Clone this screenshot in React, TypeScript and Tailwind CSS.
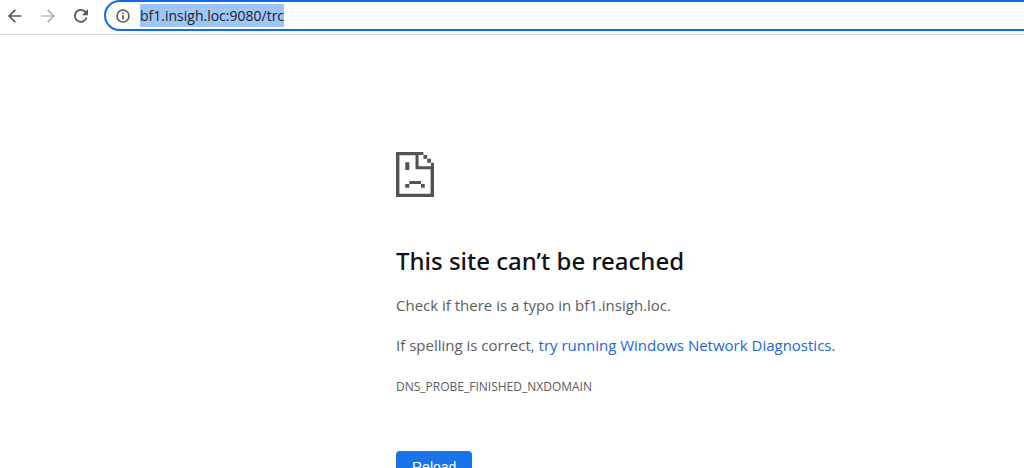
import React from 'react';

const HOST = 'bf1.insigh.loc';

const IconButton: React.FC<{ label: string; disabled?: boolean; children: React.ReactNode }> = ({
  label,
  disabled = false,
  children,
}) => (
  <button
    type="button"
    aria-label={label}
    disabled={disabled}
    className={`flex h-7 w-7 items-center justify-center rounded-full ${
      disabled ? 'text-[#b4b6b9]' : 'text-[#54575b]'
    }`}
  >
    {children}
  </button>
);

const Toolbar: React.FC = () => (
  <header className="flex h-[35px] items-start overflow-hidden border-b border-[#d9dadc]">
    <div className="flex h-[31px] shrink-0 items-center gap-[5px] pr-2 pl-px">
      <IconButton label="Back">
        <svg className="h-4 w-4" viewBox="0 0 16 16" fill="none" stroke="currentColor" strokeWidth="1.7">
          <path d="M14.5 8H2.5M8.3 1.8L2.1 8l6.2 6.2" />
        </svg>
      </IconButton>
      <IconButton label="Forward" disabled>
        <svg className="h-4 w-4" viewBox="0 0 16 16" fill="none" stroke="currentColor" strokeWidth="1.7">
          <path d="M1.5 8h12M7.7 1.8L13.9 8l-6.2 6.2" />
        </svg>
      </IconButton>
      <IconButton label="Reload this page">
        <svg className="h-4 w-4" viewBox="0 0 16 16" fill="none" stroke="currentColor" strokeWidth="1.8">
          <path d="M13.6 9.6A6 6 0 1 1 12.6 4.1" />
          <path d="M15 1.2v6H9l2.4-2.4z" fill="currentColor" stroke="none" />
        </svg>
      </IconButton>
    </div>
    {/* Address bar, runs off the right edge of the window */}
    <div className="-mr-8 ml-px flex h-[31px] flex-1 items-center rounded-full border-2 border-[#0f6bea] pl-2.5">
      <svg className="mr-2.5 h-3.5 w-3.5 shrink-0" viewBox="0 0 14 14" fill="none" aria-hidden="true">
        <circle cx="7" cy="7" r="6" stroke="#54575b" strokeWidth="1.5" />
        <path d="M7 6.2v4M7 3.6v1.5" stroke="#54575b" strokeWidth="1.7" />
      </svg>
      <input
        type="text"
        aria-label="Address"
        defaultValue={`${HOST}:9080/trc`}
        spellCheck={false}
        className="field-sizing-content h-[23px] bg-[#9ec5f8] text-sm text-[#202124] outline-none"
      />
    </div>
  </header>
);

const SadPage: React.FC = () => (
  <svg
    className="h-[45px] w-[38px]"
    viewBox="0 0 111 135"
    preserveAspectRatio="none"
    fill="#535353"
    aria-hidden="true"
  >
    <path d="M0 0h80v9H66v34h45v92H0zM10 10v115h91V52H57V10z" fillRule="evenodd" />
    <path d="M80 9h11v11H80zM91 20h11v12H91zM102 32h9v12h-9z" />
    <path d="M27 31h12v23H27zM39 87h34v9H39zM27 96h12v11H27zM73 96h11v11H73z" />
  </svg>
);

const App: React.FC = () => (
  <div className="h-screen overflow-hidden bg-white font-['Open_Sans',sans-serif] text-[#5a5d61]">
    <Toolbar />
    <main className="max-w-[600px] px-6 pt-[117px] sm:ml-[372px]">
      <SadPage />
      <h1 className="mt-12 font-['Noto_Sans',sans-serif] text-2xl leading-8 font-medium text-[#111214]">
        This site can’t be reached
      </h1>
      <p className="mt-4 text-[15px] leading-6">Check if there is a typo in {HOST}.</p>
      <p className="mt-4 text-[15px] leading-6">
        If spelling is correct,{' '}
        <a href="#diagnostics" className="text-[#1a66e0]">
          try running Windows Network Diagnostics
        </a>
        .
      </p>
      <p className="mt-4 text-xs leading-7">DNS_PROBE_FINISHED_NXDOMAIN</p>
      <button
        type="button"
        className="mt-[50px] h-8 rounded bg-[#1a73e8] px-4 font-['Liberation_Sans',sans-serif] text-sm text-white"
      >
        Reload
      </button>
    </main>
  </div>
);

export default App;
